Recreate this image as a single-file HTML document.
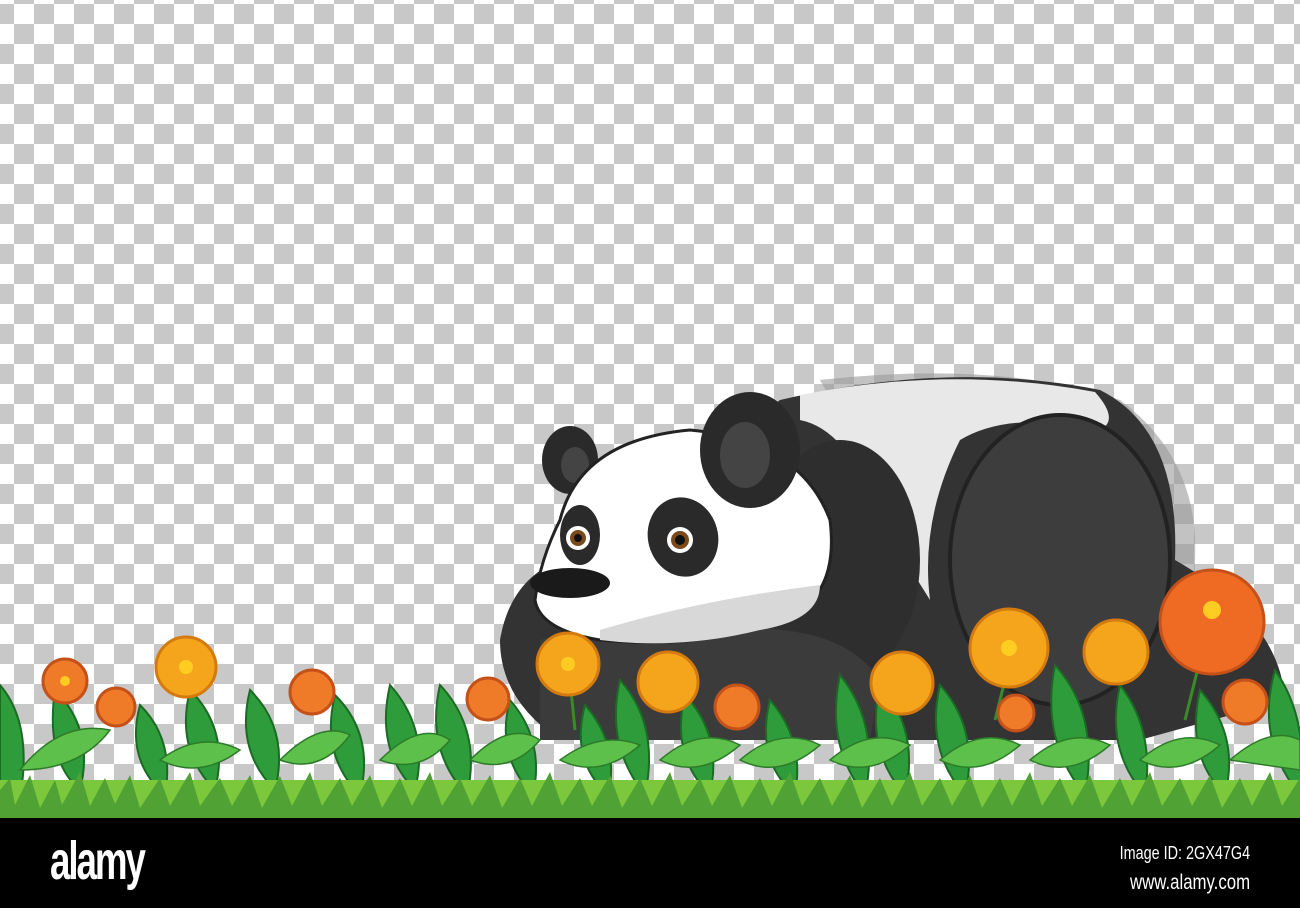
<!DOCTYPE html>
<html><head><style>
html,body{margin:0;padding:0;width:1300px;height:908px;overflow:hidden}
body{position:relative;font-family:"Liberation Sans",sans-serif}
.chk{position:absolute;left:0;top:0;width:1300px;height:818px;background-color:#fff;
background-image:linear-gradient(45deg,#c8c8c8 25%,transparent 25%,transparent 75%,#c8c8c8 75%),linear-gradient(45deg,#c8c8c8 25%,transparent 25%,transparent 75%,#c8c8c8 75%);
background-size:40px 40px;background-position:14px 4px,34px 24px}
.foot{position:absolute;left:0;top:818px;width:1300px;height:90px;background:#000;color:#fff}
.logo{position:absolute;left:50px;top:12px;font-size:54px;font-weight:bold;letter-spacing:-3px;transform:scaleX(.68);transform-origin:left}
.id{position:absolute;right:50px;top:20px;font-size:18px;text-align:right;line-height:30px;transform:scaleX(.8);transform-origin:right}
svg{position:absolute;left:0;top:0}
</style></head><body>
<div class="chk"></div>
<svg width="1300" height="818" viewBox="0 0 1300 818">
<path d="M820 380 Q1000 360 1120 400 Q1200 460 1195 560 L1195 700 L1000 700Z" fill="#9a9a9a" opacity=".6"/>
<path d="M780 400 Q950 360 1100 390 Q1180 430 1175 560 Q1280 620 1285 700 L1140 740 L560 740 Q500 700 500 640 Q510 580 560 560Z" fill="#333"/>
<path d="M800 395 Q950 365 1095 392 Q1120 420 1100 430 Q1010 410 960 440 Q920 520 930 600 L880 520 Q850 430 800 420Z" fill="#e8e8e8"/>
<ellipse cx="1060" cy="560" rx="110" ry="145" fill="#3d3d3d" stroke="#222" stroke-width="4"/>
<ellipse cx="840" cy="560" rx="80" ry="120" fill="#2e2e2e"/>
<path d="M540 640 Q620 620 720 630 Q840 620 880 680 L870 740 L540 740Z" fill="#3b3b3b"/>
<ellipse cx="570" cy="460" rx="28" ry="34" fill="#2a2a2a"/>
<ellipse cx="575" cy="465" rx="14" ry="18" fill="#444"/>
<path d="M560 520 Q580 440 690 430 Q800 440 830 520 Q840 600 780 620 Q700 650 600 640 Q540 630 535 600 Q540 560 560 520Z" fill="#fff" stroke="#222" stroke-width="3"/>
<path d="M600 630 Q700 600 820 585 Q820 620 760 630 Q680 650 600 640Z" fill="#d8d8d8"/>
<ellipse cx="750" cy="450" rx="50" ry="58" fill="#2a2a2a"/>
<ellipse cx="745" cy="455" rx="25" ry="33" fill="#444"/>
<ellipse cx="683" cy="537" rx="35" ry="40" fill="#2a2a2a" transform="rotate(-15 683 537)"/>
<ellipse cx="580" cy="535" rx="20" ry="30" fill="#2a2a2a"/>
<circle cx="680" cy="540" r="13" fill="#fff"/><circle cx="680" cy="540" r="9" fill="#7a4a1a"/><circle cx="680" cy="540" r="5" fill="#111"/>
<circle cx="578" cy="538" r="12" fill="#fff"/><circle cx="578" cy="538" r="8" fill="#7a4a1a"/><circle cx="578" cy="538" r="4" fill="#111"/>
<ellipse cx="570" cy="583" rx="40" ry="15" fill="#1a1a1a"/>
<g fill="#2e9c3a" stroke="#1c6b25" stroke-width="2">
<path d="M0 685 Q30 720 22 785 L0 790Z"/>
<path d="M55 690 Q95 730 80 790 Q45 760 55 690Z"/>
<path d="M140 705 Q175 740 165 795 Q125 760 140 705Z"/>
<path d="M190 690 Q230 730 215 790 Q175 750 190 690Z"/>
<path d="M250 690 Q290 730 275 790 Q235 750 250 690Z"/>
<path d="M335 695 Q375 735 360 795 Q320 755 335 695Z"/>
<path d="M390 685 Q430 730 415 790 Q375 750 390 685Z"/>
<path d="M440 685 Q482 730 467 795 Q425 750 440 685Z"/>
<path d="M510 700 Q545 740 533 795 Q495 755 510 700Z"/>
<path d="M585 705 Q620 745 608 795 Q570 760 585 705Z"/>
<path d="M620 680 Q660 725 645 795 Q605 745 620 680Z"/>
<path d="M685 695 Q723 735 710 795 Q670 755 685 695Z"/>
<path d="M770 700 Q805 740 795 795 Q755 760 770 700Z"/>
<path d="M840 675 Q880 725 865 795 Q825 745 840 675Z"/>
<path d="M880 685 Q920 730 905 795 Q865 750 880 685Z"/>
<path d="M940 685 Q980 730 965 795 Q925 750 940 685Z"/>
<path d="M1055 665 Q1100 715 1085 795 Q1040 740 1055 665Z"/>
<path d="M1120 685 Q1155 730 1145 795 Q1105 750 1120 685Z"/>
<path d="M1200 690 Q1240 735 1225 795 Q1185 755 1200 690Z"/>
<path d="M1275 670 Q1310 720 1300 795 Q1255 740 1275 670Z"/>
</g>
<g fill="#5cc04a" stroke="#2d7a2a" stroke-width="1.5">
<path d="M20 770 Q60 720 110 730 Q80 770 20 770Z"/>
<path d="M160 760 Q200 730 240 750 Q200 780 160 760Z"/>
<path d="M280 760 Q320 720 350 735 Q320 775 280 760Z"/>
<path d="M380 760 Q420 720 450 740 Q420 775 380 760Z"/>
<path d="M470 760 Q510 720 540 740 Q510 775 470 760Z"/>
<path d="M560 760 Q600 730 640 745 Q600 780 560 760Z"/>
<path d="M660 760 Q700 725 740 745 Q700 780 660 760Z"/>
<path d="M740 760 Q780 725 820 745 Q780 780 740 760Z"/>
<path d="M830 760 Q870 725 910 745 Q870 780 830 760Z"/>
<path d="M940 760 Q980 725 1020 745 Q980 780 940 760Z"/>
<path d="M1030 760 Q1070 725 1110 745 Q1070 780 1030 760Z"/>
<path d="M1140 760 Q1180 725 1220 745 Q1180 780 1140 760Z"/>
<path d="M1230 760 Q1270 725 1300 740 L1300 770Z"/>
</g>
<rect x="0" y="780" width="1300" height="38" fill="#7cc83c"/>
<path d="M0 818 L0 790 L10 778 L15 805 L30 775 L40 808 L55 780 L62 805 L80 772 L90 806 L105 778 L115 804 L130 775 L140 808 L160 778 L170 806 L190 772 L200 806 L220 778 L232 806 L250 775 L262 808 L280 776 L292 806 L310 772 L322 806 L340 778 L352 806 L370 775 L382 808 L400 778 L412 806 L430 772 L442 806 L460 778 L472 806 L490 775 L502 808 L520 778 L532 806 L550 772 L562 806 L580 778 L592 806 L610 775 L622 808 L640 778 L652 806 L670 772 L682 806 L700 778 L712 806 L730 775 L742 808 L760 778 L772 806 L790 772 L802 806 L820 778 L832 806 L850 775 L862 808 L880 778 L892 806 L910 772 L922 806 L940 778 L952 806 L970 775 L982 808 L1000 778 L1012 806 L1030 772 L1042 806 L1060 778 L1072 806 L1090 775 L1102 808 L1120 778 L1132 806 L1150 772 L1162 806 L1180 778 L1192 806 L1210 775 L1222 808 L1240 778 L1252 806 L1270 772 L1282 806 L1300 778 L1300 818Z" fill="#4fa233"/>
<g stroke="#3a8a2a" stroke-width="3"><line x1="570" y1="680" x2="575" y2="730"/><line x1="1205" y1="640" x2="1185" y2="720"/><line x1="1010" y1="660" x2="995" y2="720"/></g>
<g>
<circle cx="186" cy="667" r="30" fill="#f5a51c" stroke="#d47a0e" stroke-width="3"/><circle cx="186" cy="667" r="7" fill="#ffcc22"/>
<circle cx="65" cy="681" r="22" fill="#ef7a27" stroke="#c4501a" stroke-width="3"/><circle cx="65" cy="681" r="5" fill="#ffcc22"/>
<circle cx="116" cy="707" r="19" fill="#ef7a27" stroke="#c4501a" stroke-width="3"/>
<circle cx="312" cy="692" r="22" fill="#ef7a27" stroke="#c4501a" stroke-width="3"/>
<circle cx="488" cy="699" r="21" fill="#ef7a27" stroke="#c4501a" stroke-width="3"/>
<circle cx="568" cy="664" r="31" fill="#f5a51c" stroke="#d47a0e" stroke-width="3"/><circle cx="568" cy="664" r="7" fill="#ffcc22"/>
<circle cx="668" cy="682" r="30" fill="#f5a51c" stroke="#d47a0e" stroke-width="3"/>
<circle cx="737" cy="707" r="22" fill="#ef7a27" stroke="#c4501a" stroke-width="3"/>
<circle cx="902" cy="683" r="31" fill="#f5a51c" stroke="#d47a0e" stroke-width="3"/>
<circle cx="1009" cy="648" r="39" fill="#f5a51c" stroke="#d47a0e" stroke-width="3"/><circle cx="1009" cy="648" r="8" fill="#ffcc22"/>
<circle cx="1016" cy="713" r="18" fill="#ef7a27" stroke="#c4501a" stroke-width="3"/>
<circle cx="1116" cy="652" r="32" fill="#f5a51c" stroke="#d47a0e" stroke-width="3"/>
<circle cx="1212" cy="622" r="52" fill="#ef6a22" stroke="#c4501a" stroke-width="3"/><circle cx="1212" cy="610" r="9" fill="#ffcc22"/>
<circle cx="1245" cy="702" r="22" fill="#ef7a27" stroke="#c4501a" stroke-width="3"/>
</g>
</svg>
<div class="foot">
<div class="logo">alamy</div>
<div class="id">Image ID: 2GX47G4<br><span style="font-size:21px">www.alamy.com</span></div>
</div>
</body></html>
